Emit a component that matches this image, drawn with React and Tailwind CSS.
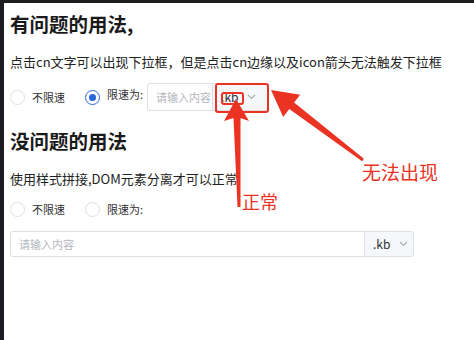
import React from 'react';

const font = { fontFamily: '"Noto Sans CJK SC", "Noto Sans", sans-serif' };

const Dot = ({ checked }) => (
    <span className={`w-[15px] h-[15px] rounded-full border flex items-center justify-center bg-white ${checked ? 'border-[#2a67dc]' : 'border-[#dcdfe6]'}`}>
        {checked && <span className="w-[7px] h-[7px] rounded-full bg-[#2a67dc]"></span>}
    </span>
);

const Radio = ({ checked, label }) => (
    <label className="flex items-center gap-[7px] text-[11px] text-[#303133]">
        <Dot checked={checked} />
        <span>{label}</span>
    </label>
);

const Chevron = () => (
    <svg width="9" height="6" viewBox="0 0 9 6" fill="none" stroke="#a8abb2" strokeWidth="1.1">
        <path d="M1 1l3.5 3.5L8 1" />
    </svg>
);

const InputGroup = ({ className, height, addonWidth }) => (
    <div className={`flex ${className}`} style={{ height }}>
        <div className="flex-1 flex items-center border border-[#dcdfe6] rounded-l-[3px] pl-[8px] text-[11px] text-[#b4b7bd] bg-white whitespace-nowrap overflow-hidden">
            请输入内容
        </div>
        <div className="flex items-center gap-[9px] border border-l-0 border-[#dcdfe6] rounded-r-[3px] bg-[#f5f7fa] pl-[8px] text-[12px] text-[#303133]" style={{ width: addonWidth }}>
            <span>.kb</span>
            <Chevron />
        </div>
    </div>
);

export default function App() {
    return (
        <div className="w-[474px] h-[340px] bg-[#1c1c21] pt-[3px] pl-[4px] overflow-hidden" style={font}>
            <div className="relative h-full bg-white px-[6px] pt-[7px]">
                <h1 className="text-[19.5px] leading-[28px] font-bold text-[#1a1a1a]">有问题的用法,</h1>
                <p className="mt-[13px] text-[13px] leading-[22px] text-[#222] whitespace-nowrap">点击cn文字可以出现下拉框，但是点击cn边缘以及icon箭头无法触发下拉框</p>

                {/* 第一行 */}
                <div className="mt-[10px] flex items-center h-[28px]">
                    <Radio label="不限速" />
                    <div className="ml-[20px]"><Dot checked /></div>
                    <span className="ml-[7px] self-start mt-[3px] text-[11px] text-[#303133]">限速为:</span>
                    <InputGroup className="ml-[4px] w-[121px]" height={28} addonWidth={55} />
                </div>

                <h2 className="mt-[16px] text-[19.5px] leading-[28px] font-bold text-[#1a1a1a]">没问题的用法</h2>
                <p className="mt-[13px] text-[13px] leading-[22px] text-[#222]">使用样式拼接,DOM元素分离才可以正常</p>

                <div className="mt-[9px] flex items-center h-[20px]">
                    <Radio label="不限速" />
                    <div className="ml-[20px]"><Radio label="限速为:" /></div>
                </div>

                <InputGroup className="mt-[12px] w-[404px]" height={26} addonWidth={49} />

                {/* 标注 */}
                <div className="absolute left-[211px] top-[80px] w-[54px] h-[30px] border-2 border-[#ea3323] rounded-[3px]"></div>
                <div className="absolute left-[217px] top-[89px] w-[23px] h-[13px] border-2 border-[#ea3323] rounded-[3px]"></div>
                <svg className="absolute left-[-4px] top-[-3px] pointer-events-none" width="474" height="340">
                    <polygon fill="#ea3323" points="236,99 249,121 240.5,118 240.5,207 237.5,207 233.5,118 224,121" />
                    <polygon fill="#ea3323" points="271,90 300.2,94.7 294.1,102.6 363.9,158.8 362.1,161.2 289.3,109 283.2,117" />
                </svg>
                <span className="absolute left-[238px] top-[186px] text-[18px] leading-[24px] text-[#ea3323]">正常</span>
                <span className="absolute left-[358px] top-[157px] text-[19px] leading-[24px] text-[#ea3323]">无法出现</span>
            </div>
        </div>
    );
}
